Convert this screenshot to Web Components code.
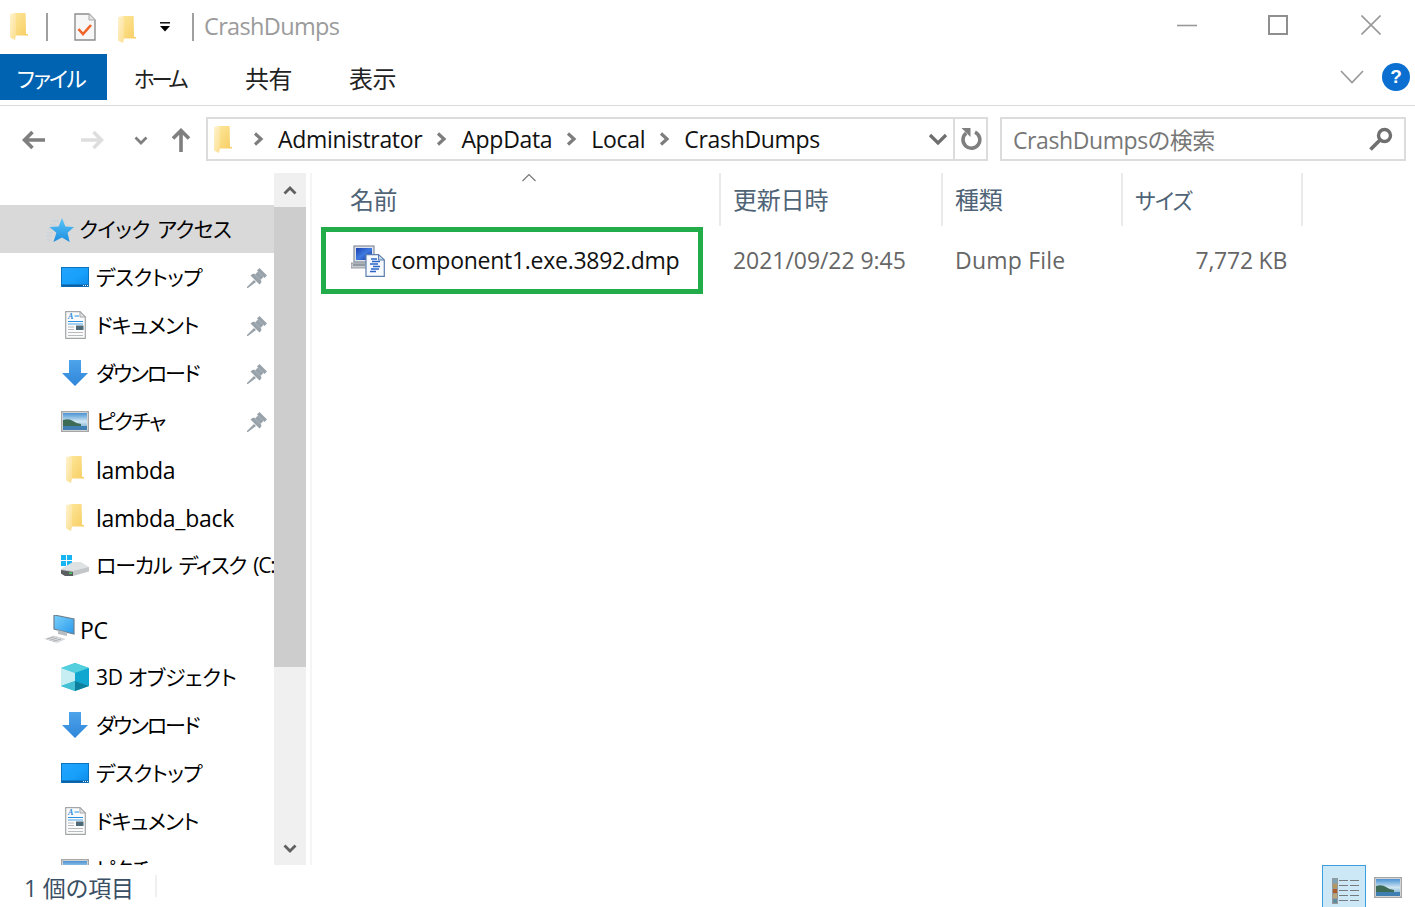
<!DOCTYPE html>
<html lang="ja">
<head>
<meta charset="utf-8">
<title>CrashDumps</title>
<style>
  html, body { margin: 0; height: 100%; background: #fff; overflow: hidden; }
  body { font: 23px "Open Sans", "Noto Sans CJK JP", sans-serif; color: #000; }
</style>
</head>
<body>
<explorer-window></explorer-window>

<script>
(function () {

  const FOLDER_DEFS = `<defs>
    <linearGradient id="fb" x1="0" y1="0" x2="1" y2="1"><stop offset="0" stop-color="#fde79a"/><stop offset="1" stop-color="#f7cd62"/></linearGradient>
    <linearGradient id="ff" x1="0" y1="0" x2="1" y2="1"><stop offset="0" stop-color="#fff3cf"/><stop offset="1" stop-color="#fbdd8c"/></linearGradient>
  </defs>`;

  const ICONS = {
    folder: `<svg viewBox="0 0 18 27" width="18" height="27">${FOLDER_DEFS}
      <path fill="url(#fb)" d="M4 0H15.6L16 21H18V22.5H4Z"/>
      <path fill="url(#ff)" d="M0 1L6 0V22L5 27L0 24.5Z"/></svg>`,
    check: `<svg viewBox="0 0 22 28" width="22" height="28">
      <path d="M1 1H15L21 7V27H1Z" fill="#f7f7f7" stroke="#8d8d8d" stroke-width="1.4"/>
      <path d="M15 1V7H21" fill="#e4e4e4" stroke="#a9a9a9" stroke-width="1"/>
      <path d="M4.5 16L9 21L17 12" fill="none" stroke="#f0642a" stroke-width="2.6"/></svg>`,
    dropdown: `<svg viewBox="0 0 12 10" width="12" height="10"><path d="M1 0.8H11" stroke="#000" stroke-width="1.4"/><path d="M1 4H11L6 9.5Z" fill="#000"/></svg>`,
    minimize: `<svg viewBox="0 0 20 20" width="20" height="20"><path d="M0 10.5H20" stroke="#999" stroke-width="1.6"/></svg>`,
    maximize: `<svg viewBox="0 0 20 20" width="20" height="20"><rect x="1" y="1" width="18" height="18" fill="none" stroke="#8f8f8f" stroke-width="2"/></svg>`,
    close: `<svg viewBox="0 0 20 20" width="20" height="20"><path d="M0.5 0.5L19.5 19.5M19.5 0.5L0.5 19.5" stroke="#999" stroke-width="1.6"/></svg>`,
    ribbonchev: `<svg viewBox="0 0 24 14" width="24" height="14"><path d="M1 1L12 12.5L23 1" fill="none" stroke="#999" stroke-width="1.7"/></svg>`,
    back: `<svg viewBox="0 0 23 20" width="23" height="20"><path d="M10.5 2L2.5 10L10.5 18M3 10H23" fill="none" stroke="currentColor" stroke-width="3.6"/></svg>`,
    forward: `<svg viewBox="0 0 23 20" width="23" height="20"><path d="M12.5 2L20.5 10L12.5 18M20 10H0" fill="none" stroke="currentColor" stroke-width="3.6"/></svg>`,
    up: `<svg viewBox="0 0 20 24" width="20" height="24"><path d="M2 10.5L10 2.5L18 10.5M10 3V24" fill="none" stroke="currentColor" stroke-width="3.6"/></svg>`,
    smalldown: `<svg viewBox="0 0 14 9" width="14" height="9"><path d="M1.5 1.5L7 7L12.5 1.5" fill="none" stroke="currentColor" stroke-width="2.8"/></svg>`,
    bigdown: `<svg viewBox="0 0 20 12" width="20" height="12"><path d="M2 2L10 10L18 2" fill="none" stroke="currentColor" stroke-width="3.2"/></svg>`,
    crumb: `<svg viewBox="0 0 11 14" width="11" height="14"><path d="M2 1.5L8 7L2 12.5" fill="none" stroke="#7d7d7d" stroke-width="3.2"/></svg>`,
    refresh: `<svg viewBox="0 0 22 24" width="22" height="24"><path d="M6.2 6.2A8.4 8.4 0 1 0 15 5.2" fill="none" stroke="#7f7f7f" stroke-width="3.6"/><path d="M1.5 1H10.5V10Z" fill="#7f7f7f"/></svg>`,
    search: `<svg viewBox="0 0 24 24" width="24" height="24"><circle cx="15.5" cy="8.5" r="6" fill="none" stroke="#6f6f6f" stroke-width="3.4"/><path d="M11 13L1.5 22.5" stroke="#6f6f6f" stroke-width="3.8"/></svg>`,
    star: `<svg viewBox="0 0 30 30" width="30" height="30">
      <defs><linearGradient id="s" x1="0" y1="0" x2="0" y2="1"><stop offset="0" stop-color="#5cc4f8"/><stop offset="1" stop-color="#1c8fe0"/></linearGradient></defs>
      <path d="M3 19H9M2 22H8M3 26H7M8 7H15M6 11H12M4 15H9" stroke="#c4d3e0" stroke-width="1.1" opacity=".9"/>
      <path fill="url(#s)" d="M18 4L21.4 12.5L30 13L23.6 18.8L25.6 28L18 23.5L9.4 28L12.4 18.8L5.5 13L14.6 12.5Z"/></svg>`,
    desktop: `<svg viewBox="0 0 28 20" width="28" height="20">
      <defs><linearGradient id="d" x1="0" y1="0" x2="1" y2="1"><stop offset="0" stop-color="#23a4ff"/><stop offset=".55" stop-color="#17a0fb"/><stop offset="1" stop-color="#0c8ae8"/></linearGradient></defs>
      <rect x=".5" y=".5" width="27" height="19" fill="url(#d)" stroke="#0a74bf"/>
      <path d="M1 18.5H27" stroke="#0b5f9e" stroke-width="2"/><path d="M22 18.5H27" stroke="#e6f4ff" stroke-dasharray="1 1"/></svg>`,
    document: `<svg viewBox="0 0 21 28" width="21" height="28">
      <path d="M.7.7H15L20.3 6V27.3H.7Z" fill="#fbfbfb" stroke="#a3a6a8" stroke-width="1.2"/>
      <path d="M15 .7V6H20.3Z" fill="#e4e6e8" stroke="#a3a6a8"/>
      <text x="3" y="8" font-family="Liberation Serif, serif" font-size="8" font-style="italic" font-weight="700" fill="#1f86d8">A</text>
      <path d="M9.5 5H14M3 10.5H18" stroke="#2a92e0" stroke-width="1"/><path d="M3 13H18" stroke="#2a92e0" stroke-width=".8"/>
      <rect x="11" y="14.5" width="7.5" height="4.5" fill="#4e6a78"/>
      <path d="M3 16H9M3 18.5H9M3 21.5H18M3 24.5H18" stroke="#b9bcbf" stroke-width="1"/></svg>`,
    download: `<svg viewBox="0 0 26 26" width="26" height="26">
      <defs><linearGradient id="a" x1="0" y1="0" x2="0" y2="1"><stop offset="0" stop-color="#4ea4ea"/><stop offset="1" stop-color="#2f86da"/></linearGradient></defs>
      <path fill="url(#a)" d="M7 0H19V13H26L13 26L0 13H7Z"/></svg>`,
    pin: `<svg viewBox="0 0 20 20" width="20" height="20" fill="#98a2aa">
      <path d="M12.5 0L20 7.5L17.5 10L10 2.5Z"/><path d="M11 3.5L16.5 9L13.5 12L8 6.5Z"/>
      <path d="M7 5.5L14.5 13Q14.5 15 12.5 16.5L3.5 7.5Q5 6 7 5.5Z"/><path d="M7 12L9 14L1 20L0 20L0 19Z"/></svg>`,
    picture: `<svg viewBox="0 0 28 21" width="28" height="21">
      <defs><linearGradient id="p" x1="0" y1="0" x2="0" y2="1"><stop offset="0" stop-color="#4a93d4"/><stop offset=".5" stop-color="#cfe6f2"/><stop offset="1" stop-color="#5a9cc4"/></linearGradient></defs>
      <rect x=".75" y=".75" width="26.5" height="19.5" fill="#fff" stroke="#a6a6a6" stroke-width="1.5"/>
      <rect x="2" y="2" width="24" height="17" fill="url(#p)"/>
      <path d="M2 9Q8 7 12 10T20 13V15H2Z" fill="#3e6b55"/><path d="M2 15H26V19H2Z" fill="#3f7fb2"/></svg>`,
    drive: `<svg viewBox="0 0 28 21" width="28" height="21">
      <rect x="0" y="0" width="5" height="5" fill="#19b4f2"/><rect x="6" y="0" width="5" height="5" fill="#19b4f2"/><rect x="0" y="6" width="5" height="5" fill="#19b4f2"/><rect x="6" y="6" width="5" height="5" fill="#19b4f2"/>
      <path d="M0 14L12 7H20L28 12V14L12 17H2Z" fill="#dfe2e3"/>
      <path d="M0 14L12 16L28 12V16.5L12 21H4L0 18.5Z" fill="#c3c7c9"/>
      <path d="M0 15L12 17V21H4L0 18.5Z" fill="#5a5e61"/><rect x="8" y="17.5" width="3" height="1.5" fill="#4bd05c"/></svg>`,
    pc: `<svg viewBox="0 0 31 28" width="31" height="28">
      <defs><linearGradient id="m" x1="0" y1="0" x2="1" y2="1"><stop offset="0" stop-color="#7ad0fb"/><stop offset="1" stop-color="#2a9aec"/></linearGradient></defs>
      <path d="M10 0L30 4V19L10 14Z" fill="url(#m)" stroke="#6a7f8f" stroke-width="1.2"/>
      <path d="M14 15L23 17.5V21L14 19Z" fill="#b8bdc1"/>
      <path d="M0 24L10 20.5L22 24L13 28Z" fill="#d7dadc"/><path d="M3 24L10 21.8M6 25.2L13 23M9 26.3L17 24" stroke="#a2a6a9" stroke-width=".8"/></svg>`,
    cube: `<svg viewBox="0 0 28 28" width="28" height="28">
      <path d="M14 0L28 5V23L14 28L0 23V5Z" fill="#2cbcd9"/>
      <path d="M0 5L14 0L28 5L14 10Z" fill="#54cfdd"/>
      <path d="M0 5L14 10V18L0 23Z" fill="#c6eef3"/>
      <path d="M14 10L28 5V23L14 18Z" fill="#0fa7cf"/>
      <path d="M14 18L28 23L14 28Z" fill="#0c7f9f"/><path d="M14 18L0 23L14 28Z" fill="#45bfd4"/></svg>`,
    dump: `<svg viewBox="0 0 34 32" width="34" height="32">
      <defs><linearGradient id="sc" x1="0" y1="0" x2="1" y2="1"><stop offset="0" stop-color="#1a3fb0"/><stop offset=".5" stop-color="#3f7be0"/><stop offset="1" stop-color="#16309a"/></linearGradient></defs>
      <rect x="3" y="1" width="20" height="16" fill="#dfe3ea" stroke="#6f7a8c"/><rect x="5" y="3" width="16" height="12" fill="url(#sc)"/>
      <path d="M0 18H20V23H0Z" fill="#c7ccd2" stroke="#858c95" stroke-width=".8"/><path d="M2 20H14" stroke="#5f6770" stroke-width="1"/>
      <path d="M15 9.7H27.5L33.3 15V31.3H15Z" fill="#f7fafe" stroke="#5b7fae" stroke-width="1.2"/><path d="M27.5 9.7V15H33.3Z" fill="#c8d8ee" stroke="#5b7fae"/>
      <path d="M20 14H26M21 16.5H29M19 19H27M22 21.5H29M20 24H28M19 26.5H25" stroke="#2a66c8" stroke-width="1.3"/></svg>`,
    details: `<svg viewBox="0 0 28 26" width="28" height="26"><rect x=".5" y=".5" width="5" height="5" fill="#7ba4b8" stroke="#999"/><rect x=".5" y="5.5" width="5" height="5" fill="#b09a62" stroke="#999"/><rect x=".5" y="10.5" width="5" height="5" fill="#b05c2a" stroke="#999"/><rect x=".5" y="15.5" width="5" height="5" fill="#b8a878" stroke="#999"/><rect x=".5" y="20.5" width="5" height="5" fill="#5f8ca0" stroke="#999"/>
      <path d="M7 2.5H16M18 2.5H27M7 7.5H16M18 7.5H27M7 12.5H16M18 12.5H27M7 17.5H16M18 17.5H27M7 22.5H16M18 22.5H27" stroke="#777b7e" stroke-width="1"/></svg>`,
  };

  class AppIcon extends HTMLElement {
    constructor() {
      super();
      this.attachShadow({mode: 'open'});
      this.shadowRoot.innerHTML = `<style>
        :host { display: inline-flex; flex: none; line-height: 0; }
      </style>${ICONS[this.getAttribute('name')] || ''}`;
    }
  }

  class TitleBar extends HTMLElement {
    constructor() {
      super();
      this.attachShadow({mode: 'open'});
      this.shadowRoot.innerHTML = `<style>
        :host { display: flex; align-items: center; height: 54px; padding-left: 10px; }
        .sep { width: 2px; height: 28px; background: #a0a0a0; }
        .title { margin: -2px 0 0 10px; color: #9b9b9b; font-size: 23.5px; letter-spacing: -.65px; }
        .controls { margin-left: auto; display: flex; gap: 71px; padding-right: 34px; margin-top: -4px; }
        .controls app-icon:last-child { margin-left: 2px; }
        .qa { margin-top: -1px; }
      </style>
      <app-icon class="qa" name="folder"></app-icon>
      <span class="sep" style="margin-left:18px"></span>
      <app-icon class="qa" name="check" style="margin-left:26px"></app-icon>
      <app-icon name="folder" style="margin:5px 0 0 22px"></app-icon>
      <app-icon name="dropdown" style="margin-left:23px"></app-icon>
      <span class="sep" style="margin-left:21px"></span>
      <span class="title"><slot></slot></span>
      <span class="controls">
        <app-icon name="minimize"></app-icon>
        <app-icon name="maximize"></app-icon>
        <app-icon name="close"></app-icon>
      </span>`;
    }
  }

  class RibbonTabs extends HTMLElement {
    constructor() {
      super();
      this.attachShadow({mode: 'open'});
      this.shadowRoot.innerHTML = `<style>
        :host { display: flex; height: 51px; border-bottom: 1px solid #dadada; box-sizing: content-box; }
        .tab { height: 46px; display: flex; align-items: center; font-size: 24px; color: #222; font-feature-settings: "palt"; padding-top: 1px; box-sizing: border-box; white-space: nowrap; }
        .kana { font-size: 21.5px; }
        .file { width: 107px; justify-content: center; background: #0063b1; color: #fff; letter-spacing: -1.6px; padding-right: 5px; }
        .right { margin-left: auto; height: 46px; display: flex; align-items: center; padding-right: 5px; }
        .help { width: 28px; height: 28px; margin-left: 18px; border-radius: 50%; background: #0a6fd0; color: #fff;
          font: 700 19px/28px "Liberation Sans", sans-serif; text-align: center; }
      </style>
      <span class="tab kana file">ファイル</span>
      <span class="tab kana" style="margin-left:27px;width:53px;letter-spacing:-3.5px">ホーム</span>
      <span class="tab" style="margin-left:58px;width:46px;letter-spacing:-.6px">共有</span>
      <span class="tab" style="margin-left:58px;letter-spacing:-.6px">表示</span>
      <span class="right"><app-icon name="ribbonchev"></app-icon><span class="help">?</span></span>`;
    }
  }

  class AddressRow extends HTMLElement {
    constructor() {
      super();
      this.attachShadow({mode: 'open'});
      this.shadowRoot.innerHTML = `<style>
        :host { display: flex; align-items: center; height: 67px; padding: 0 9px 1px 0; box-sizing: border-box; }
        .nav { display: flex; align-items: center; width: 206px; flex: none; color: #7f7f7f; margin-top: 2px; }
        .box { height: 44px; box-sizing: border-box; border: 2px solid #dcdcdc; display: flex; align-items: center; }
        .path { width: 782px; flex: none; padding-left: 6px; }
        .crumb { font-size: 23px; color: #111; letter-spacing: -.31px; white-space: nowrap; }
        .crumb-sep { margin: 0 14px; }
        .end { margin-left: auto; display: flex; align-items: center; height: 100%; }
        .refresh { height: 100%; width: 31px; border-left: 2px solid #dcdcdc; display: flex; align-items: center; justify-content: center; margin-left: 5px; }
        .search { margin-left: 12px; flex: 1; padding: 0 11px; color: #777; font-size: 23px; letter-spacing: -.4px; font-feature-settings: "palt"; justify-content: space-between; }
      </style>
      <span class="nav">
        <app-icon name="back" style="margin-left:22px"></app-icon>
        <app-icon name="forward" style="margin-left:36px;color:#dedede"></app-icon>
        <app-icon name="smalldown" style="margin-left:30px"></app-icon>
        <app-icon name="up" style="margin-left:23px"></app-icon>
      </span>
      <span class="box path">
        <app-icon name="folder"></app-icon>
        <app-icon name="crumb" style="margin-left:21px;margin-right:14px"></app-icon>
        <span class="crumb">Administrator</span><app-icon class="crumb-sep" name="crumb"></app-icon>
        <span class="crumb">AppData</span><app-icon class="crumb-sep" name="crumb"></app-icon>
        <span class="crumb">Local</span><app-icon class="crumb-sep" name="crumb"></app-icon>
        <span class="crumb">CrashDumps</span>
        <span class="end"><app-icon name="bigdown" style="color:#6e6e6e"></app-icon><span class="refresh"><app-icon name="refresh"></app-icon></span></span>
      </span>
      <span class="box search"><span>CrashDumpsの検索</span><app-icon name="search"></app-icon></span>`;
    }
  }

  class NavItem extends HTMLElement {
    constructor() {
      super();
      this.attachShadow({mode: 'open'});
      const pinned = this.hasAttribute('pinned');
      this.shadowRoot.innerHTML = `<style>
        :host { display: flex; align-items: center; height: 48px; padding-left: 60px; font-size: 21px; white-space: nowrap; overflow: hidden; font-feature-settings: "palt"; }
        :host([latin]) { font-size: 23px; letter-spacing: -.25px; }
        :host([top]) { padding-left: 44px; }
        :host([active]) { background: #d9d9d9; }
        .ico { width: 30px; display: flex; justify-content: center; flex: none; }
        .label { margin: -2px 0 0 6px; flex: 1; overflow: hidden; }
        :host([latin]) .label { margin-top: 2px; }
        :host([top]) .label { margin-left: 5px; }
        :host([latin][top]) .label { margin-left: 6px; }
        app-icon.pin { margin: 1px 7px 0 8px; }
      </style>
      <span class="ico"><app-icon name="${this.getAttribute('icon')}"></app-icon></span>
      <span class="label"><slot></slot></span>
      ${pinned ? '<app-icon class="pin" name="pin"></app-icon>' : ''}`;
    }
  }

  class NavPane extends HTMLElement {
    constructor() {
      super();
      this.attachShadow({mode: 'open'});
      this.shadowRoot.innerHTML = `<style>
        :host { display: block; height: 100%; overflow: hidden; padding-top: 32px; box-sizing: border-box; }
      </style><slot></slot>`;
    }
  }

  class ScrollBar extends HTMLElement {
    constructor() {
      super();
      this.attachShadow({mode: 'open'});
      this.shadowRoot.innerHTML = `<style>
        :host { display: flex; flex-direction: column; height: 100%; background: #f0f0f0; color: #606060; }
        .btn { height: 34px; flex: none; display: flex; align-items: center; justify-content: center; }
        .btn:first-child { padding-top: 3px; box-sizing: border-box; }
        .thumb { height: 460px; background: #cdcdcd; flex: none; }
        .track { flex: 1; }
      </style>
      <span class="btn"><app-icon name="smalldown" style="transform:scaleY(-1)"></app-icon></span>
      <span class="thumb"></span>
      <span class="track"></span>
      <span class="btn"><app-icon name="smalldown"></app-icon></span>`;
    }
  }

  class FileList extends HTMLElement {
    constructor() {
      super();
      this.attachShadow({mode: 'open'});
      this.shadowRoot.innerHTML = `<style>
        :host { display: block; position: relative; height: 100%; }
        .head, .row { display: grid; grid-template-columns: 408px 222px 180px 180px; }
        .head { height: 54px; }
        .head span { font-size: 24px; color: #4f6476; padding: 8px 0 0 13px; border-right: 2px solid #eaeaea; height: 45px; letter-spacing: -.2px; margin-right: -1px; font-feature-settings: "palt"; }
        .head span:first-child { padding-left: 38px; letter-spacing: -.5px; }
        .head .kana { font-size: 22px; letter-spacing: -1px; padding-top: 10px; height: 43px; }
        .sort { position: absolute; left: 209px; top: 0; }
        .row { height: 67px; align-items: center; color: #666; font-size: 23px; }
        .name { box-sizing: border-box; width: 382px; height: 67px; margin-left: 9px; border: 5px solid #22ac4a; display: flex; align-items: center; padding-left: 25px; color: #111; letter-spacing: -.27px; }
        .name span { margin: -2px 0 0 6px; white-space: nowrap; }
        .row > span { padding-left: 13px; margin-top: -2px; }
        .row > .date { letter-spacing: -.05px; }
        .row > .type { letter-spacing: .2px; }
        .row > .size { padding: 0 15px 0 0; text-align: right; letter-spacing: -.25px; }
      </style>
      <div class="head"><span>名前</span><span>更新日時</span><span>種類</span><span class="kana">サイズ</span></div>
      <svg class="sort" viewBox="0 0 16 9" width="16" height="9"><path d="M1.5 8L8 1.5L14.5 8" fill="none" stroke="#777" stroke-width="1.2"/></svg>
      <div class="row">
        <div class="name"><app-icon name="dump"></app-icon><span>component1.exe.3892.dmp</span></div>
        <span class="date">2021/09/22 9:45</span><span class="type">Dump File</span><span class="size">7,772 KB</span>
      </div>`;
    }
  }

  class StatusBar extends HTMLElement {
    constructor() {
      super();
      this.attachShadow({mode: 'open'});
      this.shadowRoot.innerHTML = `<style>
        :host { display: flex; align-items: center; height: 42px; padding-left: 24px; padding-right: 13px; color: #3a4f63; font-size: 23px; }
        .text { width: 131px; letter-spacing: -.25px; margin-top: 2px; white-space: nowrap; }
        .div { width: 2px; height: 22px; background: #f0f0f0; }
        .views { margin-left: auto; display: flex; align-items: flex-start; height: 100%; }
        .on { box-sizing: border-box; width: 44px; height: 42px; background: #cce8f7; border: 1px solid #3ba0df; border-bottom: none; display: flex; justify-content: center; padding: 12px 0 0 3px; margin-right: 8px; }
        .thumb { margin-top: 12px; }
      </style>
      <span class="text"><slot></slot></span><span class="div"></span>
      <span class="views">
        <span class="on"><app-icon name="details"></app-icon></span>
        <app-icon class="thumb" name="picture"></app-icon>
      </span>`;
    }
  }

  class ExplorerWindow extends HTMLElement {
    constructor() {
      super();
      this.attachShadow({mode: 'open'});
      this.shadowRoot.innerHTML = `<style>
        :host { display: flex; flex-direction: column; width: 1415px; height: 907px; }
        .main { height: 692px; display: grid; grid-template-columns: 274px 32px 4px 2px 1fr; flex: none; }
        .line { background: #f5f5f5; grid-column: 4; }
        .nav-gap { height: 16px; }
      </style>
      <title-bar>CrashDumps</title-bar>
      <ribbon-tabs></ribbon-tabs>
      <address-row></address-row>
      <div class="main">
        <nav-pane>
          <nav-item top active icon="star" style="letter-spacing:-.55px;word-spacing:3px">クイック アクセス</nav-item>
          <nav-item pinned icon="desktop" style="letter-spacing:-.55px">デスクトップ</nav-item>
          <nav-item pinned icon="document" style="letter-spacing:-.8px">ドキュメント</nav-item>
          <nav-item pinned icon="download" style="letter-spacing:-2px">ダウンロード</nav-item>
          <nav-item pinned icon="picture" style="letter-spacing:-1.4px">ピクチャ</nav-item>
          <nav-item latin icon="folder">lambda</nav-item>
          <nav-item latin icon="folder">lambda_back</nav-item>
          <nav-item icon="drive" style="letter-spacing:-1.2px;word-spacing:3px">ローカル ディスク (C:)</nav-item>
          <div class="nav-gap"></div>
          <nav-item latin top icon="pc">PC</nav-item>
          <nav-item icon="cube" style="letter-spacing:-.3px">3D オブジェクト</nav-item>
          <nav-item icon="download" style="letter-spacing:-2px">ダウンロード</nav-item>
          <nav-item icon="desktop" style="letter-spacing:-.55px">デスクトップ</nav-item>
          <nav-item icon="document" style="letter-spacing:-.8px">ドキュメント</nav-item>
          <nav-item icon="picture" style="letter-spacing:-1.4px">ピクチャ</nav-item>
        </nav-pane>
        <scroll-bar></scroll-bar>
        <span></span>
        <span class="line"></span>
        <file-list></file-list>
      </div>
      <status-bar>1 個の項目</status-bar>`;
    }
  }

  customElements.define('app-icon', AppIcon);
  customElements.define('title-bar', TitleBar);
  customElements.define('ribbon-tabs', RibbonTabs);
  customElements.define('address-row', AddressRow);
  customElements.define('nav-item', NavItem);
  customElements.define('nav-pane', NavPane);
  customElements.define('scroll-bar', ScrollBar);
  customElements.define('file-list', FileList);
  customElements.define('status-bar', StatusBar);
  customElements.define('explorer-window', ExplorerWindow);
})();
</script>
</body>
</html>
